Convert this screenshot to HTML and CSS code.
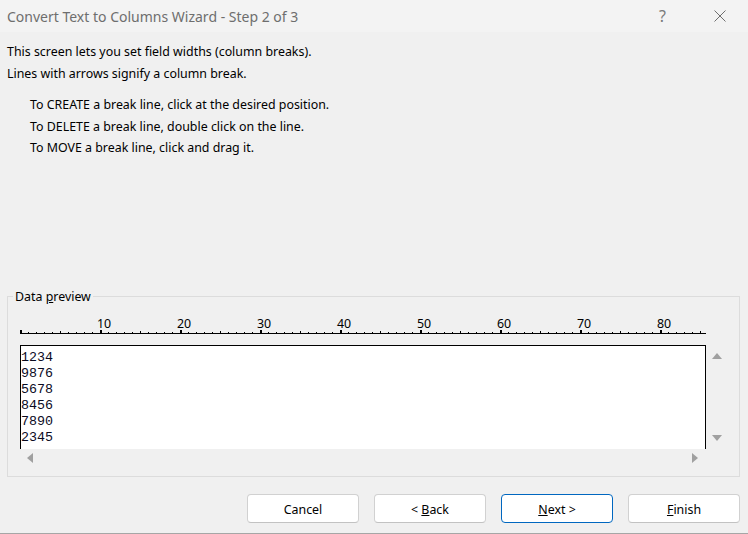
FILE: index.html
```html
<!DOCTYPE html>
<html lang="en">
<head>
  <meta charset="UTF-8" />
  <title>Convert Text to Columns Wizard - Step 2 of 3</title>
  <link rel="stylesheet" href="styles.css">
</head>
<body>
  <div class="dialog">
    <div class="titlebar">
      <span class="title">Convert Text to Columns Wizard - Step 2 of 3</span>
      <span class="help">?</span>
      <svg class="close" width="12" height="12" viewBox="0 0 12 12">
        <path d="M0.5 0.5 L11.5 11.5 M11.5 0.5 L0.5 11.5" stroke="#6e6e6e" stroke-width="1" fill="none"/>
      </svg>
    </div>

    <p class="intro">This screen lets you set field widths (column breaks).<br>Lines with arrows signify a column break.</p>

    <ul class="steps">
      <li>To CREATE a break line, click at the desired position.</li>
      <li>To DELETE a break line, double click on the line.</li>
      <li>To MOVE a break line, click and drag it.</li>
    </ul>

    <fieldset class="preview">
      <legend>Data <u>p</u>review</legend>
      <div class="ruler">
        <div class="ruler-labels">
          <span>10</span><span>20</span><span>30</span><span>40</span>
          <span>50</span><span>60</span><span>70</span><span>80</span>
        </div>
        <div class="ruler-ticks"></div>
      </div>
      <div class="data-row">
        <pre class="data">1234
9876
5678
8456
7890
2345</pre>
        <div class="vscroll">
          <svg width="10" height="6" viewBox="0 0 10 6"><polygon points="0,6 5,0 10,6" fill="#a0a0a0"/></svg>
          <svg width="10" height="6" viewBox="0 0 10 6"><polygon points="0,0 10,0 5,6" fill="#a0a0a0"/></svg>
        </div>
      </div>
      <div class="hscroll">
        <svg width="6" height="10" viewBox="0 0 6 10"><polygon points="6,0 6,10 0,5" fill="#a0a0a0"/></svg>
        <svg width="6" height="10" viewBox="0 0 6 10"><polygon points="0,0 6,5 0,10" fill="#a0a0a0"/></svg>
      </div>
    </fieldset>

    <div class="buttons">
      <button class="btn">Cancel</button>
      <button class="btn">&lt; <u>B</u>ack</button>
      <button class="btn btn-default"><u>N</u>ext &gt;</button>
      <button class="btn"><u>F</u>inish</button>
    </div>
  </div>
</body>
</html>
```

FILE: styles.css
```css
body {
  margin: 0;
  font-family: "Noto Sans", "Open Sans", sans-serif;
  font-size: 12.4px;
  color: #000;
  background: #f0f0f0;
}
.dialog {
  width: 748px;
  height: 534px;
  box-sizing: border-box;
  display: flex;
  flex-direction: column;
  background: #f0f0f0;
  border-bottom: 1px solid #a6a6a6;
}
.titlebar {
  height: 32px;
  flex: none;
  display: flex;
  align-items: center;
  padding-left: 7px;
  background: #f3f3f3;
}
.title {
  flex: 1;
  font-size: 14px;
  color: #6e6e6e;
}
.help {
  font-size: 16px;
  color: #7a7a7a;
  margin-right: 48px;
}
.close {
  margin-right: 22px;
}
.intro {
  margin: 9px 0 0 7px;
  line-height: 22px;
}
.steps {
  list-style: none;
  margin: 9px 0 0 0;
  padding-left: 30px;
  line-height: 21.5px;
}
.preview {
  margin: auto 8px 0 7px;
  padding: 14px 0 10px 12px;
  border: 1px solid #dcdcdc;
  min-width: 0;
}
.preview legend {
  margin-left: -7px;
  padding: 0 2px;
  line-height: 13px;
}
.ruler {
  width: 686px;
}
.ruler-labels {
  display: flex;
  height: 13px;
  line-height: 13px;
  padding-left: 77px;
}
.ruler-labels span {
  width: 80px;
  flex: none;
}
.ruler-ticks {
  height: 4px;
  background:
    linear-gradient(#000, #000) left bottom / 100% 1px no-repeat,
    repeating-linear-gradient(90deg, #000 0 2px, transparent 2px 80px) left bottom / 100% 4px no-repeat,
    repeating-linear-gradient(90deg, #000 0 1px, transparent 1px 40px) left bottom / 100% 3px no-repeat,
    repeating-linear-gradient(90deg, #000 0 1px, transparent 1px 8px) left bottom / 681px 2px no-repeat;
}
.data-row {
  display: flex;
  margin-top: 11px;
}
.data {
  width: 686px;
  height: 104px;
  box-sizing: border-box;
  margin: 0;
  padding: 4px 0 0 0;
  background: #fff;
  border: 1px solid #000;
  border-bottom: none;
  font-family: "Liberation Mono", monospace;
  font-size: 13.333px;
  line-height: 16px;
  color: #0a0a1e;
}
.vscroll {
  width: 22px;
  display: flex;
  flex-direction: column;
  align-items: center;
  justify-content: space-between;
  padding: 8px 0 8px;
}
.hscroll {
  width: 686px;
  height: 17px;
  box-sizing: border-box;
  display: flex;
  align-items: center;
  justify-content: space-between;
  padding: 0 8px 0 7px;
}
.buttons {
  display: flex;
  justify-content: flex-end;
  gap: 15px;
  margin-top: 17px;
  padding: 0 8px 10px 0;
}
.btn {
  width: 112px;
  height: 29px;
  background: #fff;
  border: 1px solid #d1d1d1;
  border-bottom-color: #c2c2c2;
  border-radius: 4px;
  font-family: "Noto Sans", "Open Sans", sans-serif;
  font-size: 12.4px;
  color: #000;
  padding: 1px 0 0;
}
.btn-default {
  border-color: #0067c0;
}
```
